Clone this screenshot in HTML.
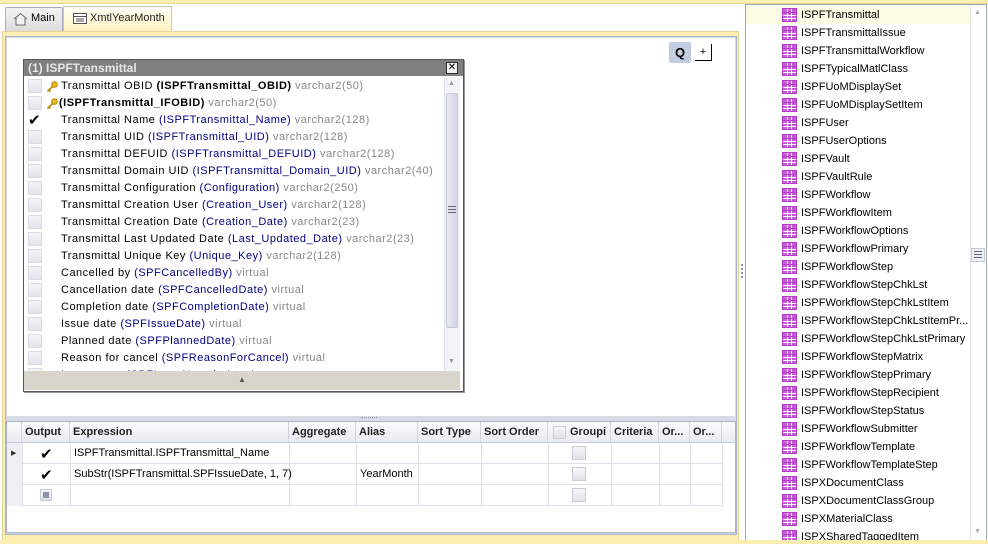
<!DOCTYPE html>
<html><head><meta charset="utf-8"><style>
*{margin:0;padding:0;box-sizing:border-box}
body{width:988px;height:544px;position:relative;background:#fff;font-family:"Liberation Sans",sans-serif;font-size:11px;overflow:hidden;color:#000}
.a{position:absolute}
.row{position:absolute;left:0;height:17px;line-height:19px;white-space:nowrap;letter-spacing:0.5px}
.cb{position:absolute;left:4px;top:2px;width:14px;height:14px;border:1px solid #d8dbe4;background:linear-gradient(#f4f5f8,#e2e4ec)}
.b{color:#000080}.g{color:#888}
.rl{position:absolute;left:36px;height:18px;line-height:18px;white-space:nowrap}
.ic{position:absolute;left:0;top:2px;width:15px;height:14px;border:1px solid #b23cc8;background:
linear-gradient(#b23cc8,#b23cc8) 0 3px/100% 1px no-repeat,
linear-gradient(#fff,#fff) 0 6px/100% 1px no-repeat,linear-gradient(#fff,#fff) 0 9px/100% 1px no-repeat,
linear-gradient(90deg,transparent 4px,#fff 4px,#fff 5px,transparent 5px,transparent 8px,#fff 8px,#fff 9px,transparent 9px),#c65ad8}
.hd{position:absolute;top:0;height:20px;line-height:20px;font-weight:bold;color:#222;border-right:1px solid #d0d4de;padding-left:3px;font-size:11px;white-space:nowrap;overflow:hidden}
.gc{position:absolute;height:21px;line-height:21px;border-right:1px solid #dde0e8;border-bottom:1px solid #dde0e8;padding-left:3px;white-space:nowrap}
.sb{position:absolute;width:14px;height:14px;border:1px solid #c8ccd6;background:linear-gradient(#f6f7f9,#dfe2e9)}
.key{position:absolute;left:22px;top:4px}
</style></head><body>
<div class="a" style="left:0;top:0;width:988px;height:4px;background:#fbeeb0;border-bottom:1px solid #e8d890"></div>
<div class="a" style="left:5px;top:7px;width:58px;height:24px;border:1px solid #aab;border-bottom:none;background:linear-gradient(#f4f4f4,#dcdcdc);border-radius:2px 2px 0 0"></div>
<svg class="a" style="left:13px;top:12px" width="15" height="14"><path d="M1 7 L7.5 1.5 L14 7 M3 6 V13 H12 V6" fill="#f4f4f4" stroke="#666"/></svg>
<div class="a" style="left:31px;top:12px;font-size:11px">Main</div>
<div class="a" style="left:63px;top:6px;width:109px;height:26px;border:1px solid #c8c8b0;border-bottom:none;background:linear-gradient(#fffef6,#fdf2c0)"></div>
<svg class="a" style="left:73px;top:13px" width="14" height="11"><rect x=".5" y=".5" width="13" height="10" fill="#fff" stroke="#555"/><path d="M.5 3.5H13.5M3 6H11M3 8H11" stroke="#555"/></svg>
<div class="a" style="left:90px;top:12px;color:#222">XmtlYearMonth</div>
<div class="a" style="left:2px;top:31px;width:737px;height:511px;background:#fbeeb0;border:1px solid #e3d59a"></div>
<div class="a" style="left:5px;top:36px;width:732px;height:499px;background:#d8dce6;border:1px solid #a9b3c9"></div>
<div class="a" style="left:7px;top:38px;width:728px;height:378px;background:#fff"></div>
<div class="a" style="left:669px;top:42px;width:22px;height:21px;background:#c2cde0;border-radius:2px;font-weight:bold;font-size:13px;text-align:center;line-height:21px">Q</div>
<div class="a" style="left:695px;top:44px;width:17px;height:17px;border-right:1px solid #000;border-bottom:1px solid #000;text-align:center;line-height:16px;font-size:11px">+</div>
<div class="a" style="left:23px;top:59px;width:441px;height:333px;border:1px solid #555;background:#fff;box-shadow:1px 1px 0 #999"></div>
<div class="a" style="left:24px;top:60px;width:439px;height:16px;background:#808080;color:#e6e6e6;font-weight:bold;font-size:12px;line-height:16px;padding-left:4px">(1) ISPFTransmittal</div>
<div class="a" style="left:446px;top:62px;width:12px;height:12px;background:#eee;border:1px solid #333;font-size:10px;line-height:10px;text-align:center">✕</div>
<div class="a" style="left:444px;top:77px;width:16px;height:294px;background:#f3f4f7;border-left:1px solid #e0e2ea"></div>
<div class="a" style="left:446px;top:93px;width:12px;height:235px;background:linear-gradient(90deg,#e8eaf2,#d2d6e4);border:1px solid #c4c9d8;border-radius:2px"></div>
<div class="a" style="left:448px;top:206px;width:8px;height:7px;border-top:1px solid #667;border-bottom:1px solid #667;background:linear-gradient(#667,#667) 0 2px/100% 1px no-repeat"></div>
<div class="a" style="left:448px;top:80px;color:#999;font-size:7px">▲</div>
<div class="a" style="left:448px;top:358px;color:#999;font-size:7px">▼</div>
<div class="a" style="left:24px;top:371px;width:436px;height:19px;background:#d8d5cc;text-align:center;color:#555;font-size:8px;line-height:18px">▲</div>
<div class="a" style="left:24px;top:77px;width:420px;height:294px;overflow:hidden">
<div class="row" style="top:0"><div class="cb"></div><svg class="key" width="12" height="11"><circle cx="8.5" cy="3.5" r="2.8" fill="#e8b820" stroke="#b88a00"/><path d="M7 5 L1.5 10.5 M3 9 L4.5 10.5" stroke="#b88a00" stroke-width="1.6"/></svg><span style="position:absolute;left:37px">Transmittal OBID <b>(ISPFTransmittal_OBID)</b> <span class="g">varchar2(50)</span></span></div>
<div class="row" style="top:17px"><div class="cb"></div><svg class="key" width="12" height="11"><circle cx="8.5" cy="3.5" r="2.8" fill="#e8b820" stroke="#b88a00"/><path d="M7 5 L1.5 10.5 M3 9 L4.5 10.5" stroke="#b88a00" stroke-width="1.6"/></svg><span style="position:absolute;left:35px"><b>(ISPFTransmittal_IFOBID)</b> <span class="g">varchar2(50)</span></span></div>
<div class="row" style="top:34px"><span style="position:absolute;left:4px;font-size:15px">✔</span><span style="position:absolute;left:37px">Transmittal Name <span class="b">(ISPFTransmittal_Name)</span> <span class="g">varchar2(128)</span></span></div>
<div class="row" style="top:51px"><div class="cb"></div><span style="position:absolute;left:37px">Transmittal UID <span class="b">(ISPFTransmittal_UID)</span> <span class="g">varchar2(128)</span></span></div>
<div class="row" style="top:68px"><div class="cb"></div><span style="position:absolute;left:37px">Transmittal DEFUID <span class="b">(ISPFTransmittal_DEFUID)</span> <span class="g">varchar2(128)</span></span></div>
<div class="row" style="top:85px"><div class="cb"></div><span style="position:absolute;left:37px">Transmittal Domain UID <span class="b">(ISPFTransmittal_Domain_UID)</span> <span class="g">varchar2(40)</span></span></div>
<div class="row" style="top:102px"><div class="cb"></div><span style="position:absolute;left:37px">Transmittal Configuration <span class="b">(Configuration)</span> <span class="g">varchar2(250)</span></span></div>
<div class="row" style="top:119px"><div class="cb"></div><span style="position:absolute;left:37px">Transmittal Creation User <span class="b">(Creation_User)</span> <span class="g">varchar2(128)</span></span></div>
<div class="row" style="top:136px"><div class="cb"></div><span style="position:absolute;left:37px">Transmittal Creation Date <span class="b">(Creation_Date)</span> <span class="g">varchar2(23)</span></span></div>
<div class="row" style="top:153px"><div class="cb"></div><span style="position:absolute;left:37px">Transmittal Last Updated Date <span class="b">(Last_Updated_Date)</span> <span class="g">varchar2(23)</span></span></div>
<div class="row" style="top:170px"><div class="cb"></div><span style="position:absolute;left:37px">Transmittal Unique Key <span class="b">(Unique_Key)</span> <span class="g">varchar2(128)</span></span></div>
<div class="row" style="top:187px"><div class="cb"></div><span style="position:absolute;left:37px">Cancelled by <span class="b">(SPFCancelledBy)</span> <span class="g">virtual</span></span></div>
<div class="row" style="top:204px"><div class="cb"></div><span style="position:absolute;left:37px">Cancellation date <span class="b">(SPFCancelledDate)</span> <span class="g">virtual</span></span></div>
<div class="row" style="top:221px"><div class="cb"></div><span style="position:absolute;left:37px">Completion date <span class="b">(SPFCompletionDate)</span> <span class="g">virtual</span></span></div>
<div class="row" style="top:238px"><div class="cb"></div><span style="position:absolute;left:37px">Issue date <span class="b">(SPFIssueDate)</span> <span class="g">virtual</span></span></div>
<div class="row" style="top:255px"><div class="cb"></div><span style="position:absolute;left:37px">Planned date <span class="b">(SPFPlannedDate)</span> <span class="g">virtual</span></span></div>
<div class="row" style="top:272px"><div class="cb"></div><span style="position:absolute;left:37px">Reason for cancel <span class="b">(SPFReasonForCancel)</span> <span class="g">virtual</span></span></div>
<div class="row" style="top:289px"><div class="cb"></div><span style="position:absolute;left:37px">Issue name <span class="b">(SPFIssueName)</span> <span class="g">virtual</span></span></div>
</div>
<div class="a" style="left:361px;top:417px;width:16px;height:2px;border-top:1px dotted #8894b0"></div>
<div class="a" style="left:6px;top:421px;width:730px;height:112px;background:#fff;border:1px solid #a9b3c9"></div>
<div class="a" style="left:7px;top:422px;width:728px;height:21px;background:linear-gradient(#fafbfc,#e8ebf1);border-bottom:1px solid #c8cdd8"></div>
<div class="a" style="left:7px;top:422px;width:728px;height:21px">
<div class="hd" style="left:0;width:15px"></div>
<div class="hd" style="left:15px;width:48px">Output</div>
<div class="hd" style="left:63px;width:219px">Expression</div>
<div class="hd" style="left:282px;width:67px">Aggregate</div>
<div class="hd" style="left:349px;width:62px">Alias</div>
<div class="hd" style="left:411px;width:63px">Sort Type</div>
<div class="hd" style="left:474px;width:67px">Sort Order</div>
<div class="hd" style="left:541px;width:63px;padding-left:22px">Groupi</div>
<div class="sb" style="left:546px;top:4px;width:13px;height:13px"></div>
<div class="hd" style="left:604px;width:48px">Criteria</div>
<div class="hd" style="left:652px;width:31px">Or...</div>
<div class="hd" style="left:683px;width:32px">Or...</div>
</div>
<div class="a" style="left:7px;top:443px;width:16px;height:63px;background:#eef0f5;border-right:1px solid #dde0e8"></div>
<div class="a" style="left:11px;top:449px;font-size:7px;color:#333">▶</div>
<div class="a" style="left:23px;top:443px;width:708px;height:63px">
<div class="gc" style="left:0;top:0;width:48px"></div><div class="gc" style="left:48px;top:0;width:219px">ISPFTransmittal.ISPFTransmittal_Name</div><div class="gc" style="left:267px;top:0;width:67px"></div><div class="gc" style="left:334px;top:0;width:62px"></div><div class="gc" style="left:396px;top:0;width:63px"></div><div class="gc" style="left:459px;top:0;width:67px"></div><div class="gc" style="left:526px;top:0;width:63px"></div><div class="gc" style="left:589px;top:0;width:48px"></div><div class="gc" style="left:637px;top:0;width:31px"></div><div class="gc" style="left:668px;top:0;width:32px"></div>
<div class="gc" style="left:0;top:21px;width:48px"></div><div class="gc" style="left:48px;top:21px;width:219px">SubStr(ISPFTransmittal.SPFIssueDate, 1, 7)</div><div class="gc" style="left:267px;top:21px;width:67px"></div><div class="gc" style="left:334px;top:21px;width:62px">YearMonth</div><div class="gc" style="left:396px;top:21px;width:63px"></div><div class="gc" style="left:459px;top:21px;width:67px"></div><div class="gc" style="left:526px;top:21px;width:63px"></div><div class="gc" style="left:589px;top:21px;width:48px"></div><div class="gc" style="left:637px;top:21px;width:31px"></div><div class="gc" style="left:668px;top:21px;width:32px"></div>
<div class="gc" style="left:0;top:42px;width:48px"></div><div class="gc" style="left:48px;top:42px;width:219px"></div><div class="gc" style="left:267px;top:42px;width:67px"></div><div class="gc" style="left:334px;top:42px;width:62px"></div><div class="gc" style="left:396px;top:42px;width:63px"></div><div class="gc" style="left:459px;top:42px;width:67px"></div><div class="gc" style="left:526px;top:42px;width:63px"></div><div class="gc" style="left:589px;top:42px;width:48px"></div><div class="gc" style="left:637px;top:42px;width:31px"></div><div class="gc" style="left:668px;top:42px;width:32px"></div>
</div>
<div class="a" style="left:40px;top:445px;font-size:15px">✔</div>
<div class="a" style="left:40px;top:466px;font-size:15px">✔</div>
<div class="sb" style="left:40px;top:489px;width:12px;height:12px"></div>
<div class="a" style="left:43px;top:492px;width:6px;height:6px;background:#8a94b0"></div>
<div class="sb" style="left:572px;top:446px"></div>
<div class="sb" style="left:572px;top:467px"></div>
<div class="sb" style="left:572px;top:488px"></div>
<div class="a" style="left:739px;top:4px;width:6px;height:538px;background:#fff"></div>
<div class="a" style="left:741px;top:264px;width:2px;height:14px;border-left:2px dotted #8894b0"></div>
<div class="a" style="left:745px;top:4px;width:242px;height:537px;border:1px solid #9aa;background:#fff"></div>
<div class="a" style="left:746px;top:6px;width:224px;height:18px;background:#fdfbe4"></div>
<div class="a" style="left:970px;top:5px;width:16px;height:535px;background:#fff;border-left:1px solid #e4e6ec"></div>
<div class="a" style="left:974px;top:9px;color:#aaa;font-size:7px">▲</div>
<div class="a" style="left:971px;top:248px;width:14px;height:14px;border:1px solid #c4c9d8;background:#eef0f5"></div>
<div class="a" style="left:974px;top:251px;width:8px;height:7px;border-top:1px solid #667;border-bottom:1px solid #667;background:linear-gradient(#667,#667) 0 2px/100% 1px no-repeat"></div>
<div class="a" style="left:974px;top:528px;color:#aaa;font-size:7px">▼</div>
<div class="a" style="left:746px;top:6px;width:224px;height:534px;overflow:hidden">
<div style="position:absolute;left:0;top:0;width:224px">
<div class="rl" style="top:0"><i class="ic"></i><span style="margin-left:19px">ISPFTransmittal</span></div>
<div class="rl" style="top:18px"><i class="ic"></i><span style="margin-left:19px">ISPFTransmittalIssue</span></div>
<div class="rl" style="top:36px"><i class="ic"></i><span style="margin-left:19px">ISPFTransmittalWorkflow</span></div>
<div class="rl" style="top:54px"><i class="ic"></i><span style="margin-left:19px">ISPFTypicalMatlClass</span></div>
<div class="rl" style="top:72px"><i class="ic"></i><span style="margin-left:19px">ISPFUoMDisplaySet</span></div>
<div class="rl" style="top:90px"><i class="ic"></i><span style="margin-left:19px">ISPFUoMDisplaySetItem</span></div>
<div class="rl" style="top:108px"><i class="ic"></i><span style="margin-left:19px">ISPFUser</span></div>
<div class="rl" style="top:126px"><i class="ic"></i><span style="margin-left:19px">ISPFUserOptions</span></div>
<div class="rl" style="top:144px"><i class="ic"></i><span style="margin-left:19px">ISPFVault</span></div>
<div class="rl" style="top:162px"><i class="ic"></i><span style="margin-left:19px">ISPFVaultRule</span></div>
<div class="rl" style="top:180px"><i class="ic"></i><span style="margin-left:19px">ISPFWorkflow</span></div>
<div class="rl" style="top:198px"><i class="ic"></i><span style="margin-left:19px">ISPFWorkflowItem</span></div>
<div class="rl" style="top:216px"><i class="ic"></i><span style="margin-left:19px">ISPFWorkflowOptions</span></div>
<div class="rl" style="top:234px"><i class="ic"></i><span style="margin-left:19px">ISPFWorkflowPrimary</span></div>
<div class="rl" style="top:252px"><i class="ic"></i><span style="margin-left:19px">ISPFWorkflowStep</span></div>
<div class="rl" style="top:270px"><i class="ic"></i><span style="margin-left:19px">ISPFWorkflowStepChkLst</span></div>
<div class="rl" style="top:288px"><i class="ic"></i><span style="margin-left:19px">ISPFWorkflowStepChkLstItem</span></div>
<div class="rl" style="top:306px"><i class="ic"></i><span style="margin-left:19px">ISPFWorkflowStepChkLstItemPr...</span></div>
<div class="rl" style="top:324px"><i class="ic"></i><span style="margin-left:19px">ISPFWorkflowStepChkLstPrimary</span></div>
<div class="rl" style="top:342px"><i class="ic"></i><span style="margin-left:19px">ISPFWorkflowStepMatrix</span></div>
<div class="rl" style="top:360px"><i class="ic"></i><span style="margin-left:19px">ISPFWorkflowStepPrimary</span></div>
<div class="rl" style="top:378px"><i class="ic"></i><span style="margin-left:19px">ISPFWorkflowStepRecipient</span></div>
<div class="rl" style="top:396px"><i class="ic"></i><span style="margin-left:19px">ISPFWorkflowStepStatus</span></div>
<div class="rl" style="top:414px"><i class="ic"></i><span style="margin-left:19px">ISPFWorkflowSubmitter</span></div>
<div class="rl" style="top:432px"><i class="ic"></i><span style="margin-left:19px">ISPFWorkflowTemplate</span></div>
<div class="rl" style="top:450px"><i class="ic"></i><span style="margin-left:19px">ISPFWorkflowTemplateStep</span></div>
<div class="rl" style="top:468px"><i class="ic"></i><span style="margin-left:19px">ISPXDocumentClass</span></div>
<div class="rl" style="top:486px"><i class="ic"></i><span style="margin-left:19px">ISPXDocumentClassGroup</span></div>
<div class="rl" style="top:504px"><i class="ic"></i><span style="margin-left:19px">ISPXMaterialClass</span></div>
<div class="rl" style="top:522px"><i class="ic"></i><span style="margin-left:19px">ISPXSharedTaggedItem</span></div>
</div></div>
<div class="a" style="left:0;top:540px;width:988px;height:4px;background:#fbeeb0"></div>
</body></html>
